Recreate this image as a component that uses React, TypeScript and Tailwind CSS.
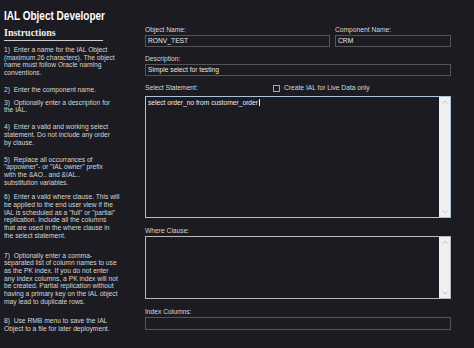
import React from "react";

const steps: { lines: string[]; gap: string }[] = [
  {
    lines: [
      "1)  Enter a name for the IAL Object",
      "(maximum 26 characters). The object",
      "name must follow Oracle naming",
      "conventions.",
    ],
    gap: "mt-0",
  },
  { lines: ["2)  Enter the component name."], gap: "mt-[9px]" },
  {
    lines: ["3)  Optionally enter a description for", "the IAL."],
    gap: "mt-[5px]",
  },
  {
    lines: [
      "4)  Enter a valid and working select",
      "statement. Do not include any order",
      "by clause.",
    ],
    gap: "mt-[9.5px]",
  },
  {
    lines: [
      "5)  Replace all occurrances of",
      "\"appowner\"- or \"IAL owner\" prefix",
      "with the &AO.. and &IAL..",
      "substitution variables.",
    ],
    gap: "mt-[9px]",
  },
  {
    lines: [
      "6)  Enter a valid where clause. This will",
      "be applied to the end user view if the",
      "IAL is scheduled as a \"full\" or \"partial\"",
      "replication. Include all the columns",
      "that are used in the where clause in",
      "the select statement.",
    ],
    gap: "mt-[7px]",
  },
  {
    lines: [
      "7)  Optionally enter a comma-",
      "separated list of column names to use",
      "as the PK index. If you do not enter",
      "any index columns, a PK index will not",
      "be created. Partial replication without",
      "having a primary key on the IAL object",
      "may lead to duplicate rows.",
    ],
    gap: "mt-[12px]",
  },
  {
    lines: [
      "8)  Use RMB menu to save the IAL",
      "Object to a file for later deployment.",
    ],
    gap: "mt-[12px]",
  },
];

function Label({ children, className = "" }: { children: React.ReactNode; className?: string }) {
  return (
    <div className={`h-[8px] leading-[8px] text-[6.7px] text-[#d8d8d8] ${className}`}>{children}</div>
  );
}

function Field({ value, className = "" }: { value?: string; className?: string }) {
  return (
    <div
      className={`h-[12px] border border-[#555559] px-[2px] leading-[10px] text-[6.7px] text-[#e8e8e8] ${className}`}
    >
      {value}
    </div>
  );
}

function Chevron({ up }: { up?: boolean }) {
  return (
    <svg width="6" height="4" viewBox="0 0 6 4" className="block">
      <path
        d={up ? "M0.5 3.5 L3 1 L5.5 3.5" : "M0.5 0.5 L3 3 L5.5 0.5"}
        fill="none"
        stroke="#b4b4b4"
        strokeWidth="0.8"
      />
    </svg>
  );
}

function TextArea({
  children,
  height,
  border,
}: {
  children?: React.ReactNode;
  height: string;
  border: string;
}) {
  return (
    <div className={`flex ${height} border ${border}`}>
      <div className="flex-1 px-[2px] pt-[1px] leading-[9px] text-[6.7px] text-[#ececec]">
        {children}
      </div>
      <div className="flex w-[11px] flex-col items-center justify-between bg-[#f0f0f0] py-[3px]">
        <Chevron up />
        <Chevron />
      </div>
    </div>
  );
}

export default function App() {
  return (
    <div className="h-[348px] w-[474px] overflow-hidden bg-[#1c1b21] font-['Liberation_Sans',Arial,sans-serif] text-[#dcdcdc]">
      <h1 className="h-[20px] pl-[4px] pt-[3px]">
        <span className="inline-block origin-left scale-x-[0.8] text-[12.5px] font-bold leading-[14px] text-white">
          IAL Object Developer
        </span>
      </h1>

      <div className="flex">
        <aside className="w-[145px] pl-[4px]">
          <h2 className="mt-[7px] font-['Liberation_Serif',serif] text-[10px] font-bold leading-[11px] text-[#ececec]">
            Instructions
          </h2>
          <div className="mt-[2px] h-px w-[99px] bg-[#cfcfcf]" />
          <div className="mt-[5px] text-[6.7px] leading-[7.7px] text-[#d6d6d6]">
            {steps.map((s, i) => (
              <p key={i} className={s.gap}>
                {s.lines.map((l, j) => (
                  <span key={j} className="block whitespace-pre">
                    {l}
                  </span>
                ))}
              </p>
            ))}
          </div>
        </aside>

        <main className="w-[306px] pt-[5.5px]">
          <div className="flex gap-[5px]">
            <div className="w-[185px]">
              <Label>Object Name:</Label>
              <Field value="RONV_TEST" className="mt-[1.5px]" />
            </div>
            <div className="flex-1">
              <Label>Component Name:</Label>
              <Field value="CRM" className="mt-[1.5px]" />
            </div>
          </div>

          <div className="mt-[8px]">
            <Label>Description:</Label>
            <Field value="Simple select for testing" className="mt-[1px]" />
          </div>

          <div className="mt-[8px]">
            <div className="flex items-center">
              <Label className="w-[128px]">Select Statement:</Label>
              <label className="flex items-center gap-[4px] text-[6.7px] leading-[8px] text-[#d8d8d8]">
                <span className="h-[7px] w-[7px] border border-[#a8a8a8]" />
                Create IAL for Live Data only
              </label>
            </div>
            <div className="mt-[3.5px]">
              <TextArea height="h-[122px]" border="border-[#a9c3dc]">
                select order_no from customer_order
                <span className="ml-px inline-block h-[7px] w-px bg-[#f0f0f0] align-middle" />
              </TextArea>
            </div>
          </div>

          <div className="mt-[9px]">
            <Label>Where Clause:</Label>
            <div className="mt-[1.5px]">
              <TextArea height="h-[63px]" border="border-[#b8b8b8]" />
            </div>
          </div>

          <div className="mt-[8.5px]">
            <Label>Index Columns:</Label>
            <Field className="mt-[1.5px] h-[13px] border-[#4c4c50]" />
          </div>
        </main>
      </div>
    </div>
  );
}
